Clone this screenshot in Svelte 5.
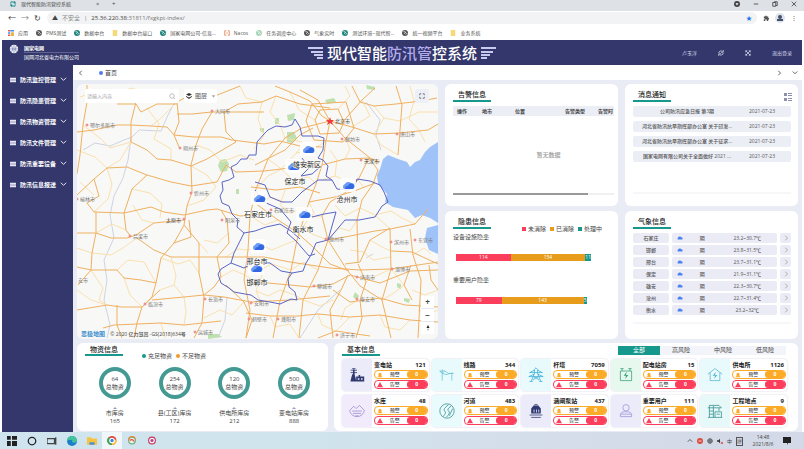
<script>
	const bookmarks = [
		{ name: '应用', icon: 'apps' },
		{ name: 'PMS测试', icon: 'globe' },
		{ name: '数据中台', icon: 'grid' },
		{ name: '数据中台接口', icon: 'folder' },
		{ name: '国家电网公司-信息...', icon: 'grid' },
		{ name: 'Nacos', icon: 'nacos' },
		{ name: '任务调度中心', icon: 'leaf' },
		{ name: '气象实时', icon: 'globe' },
		{ name: '测试环境--现代智...', icon: 'grid' },
		{ name: '统一视频平台', icon: 'globe' },
		{ name: '业务系统', icon: 'folder' }
	];

	const menu = ['防汛监控管理', '防汛隐患管理', '防汛物资管理', '防汛文件管理', '防汛重要设备', '防汛信息报送'];

	const notices = [
		{ text: '公司防汛应急日报 第3期', date: '2021-07-23' },
		{ text: '河北省防汛抗旱指挥部办公室 关于印发...', date: '2021-07-23' },
		{ text: '河北省防汛抗旱指挥部办公室 关于征求...', date: '2021-07-23' },
		{ text: '国家电网有限公司关于全面做好 2021 ...', date: '2021-07-23' }
	];

	const weather = [
		['石家庄', '23.2~30.7℃'],
		['邯郸', '23.8~31.5℃'],
		['邢台', '23.7~31.1℃'],
		['保定', '21.9~31.1℃'],
		['雄安', '22.3~30.7℃'],
		['沧州', '22.7~31.4℃'],
		['衡水', '23.2~32℃']
	];

	const dangers = [
		{ name: '设备设施隐患', parts: [[114, 36], [154, 49], [11, 4]] },
		{ name: '重要用户隐患', parts: [[79, 30], [143, 54], [5, 2]] }
	];

	const stores = [
		{ name: '市库房', total: 64, count: 165 },
		{ name: '县(工区)库房', total: 254, count: 172 },
		{ name: '供电所库房', total: 120, count: 212 },
		{ name: '变电站库房', total: 500, count: 888 }
	];

	const stats = [
		{ name: '变电站', count: 121, tint: '#ecebfa', color: '#2f3a70', fill: 'M2 18V17L4 9H5V3H7V9L9 17V12H12V10H14V12H19V18ZM11 14V16H13V14ZM15 14V16H17V14Z', line: 'M2 4H10M2 7H10M4 2H8' },
		{ name: '线路', count: 344, tint: '#e9fafd', color: '#6fc5d6', fill: '', line: 'M4 3V17M16 7V17M1 5H7M13 8H18M1 5Q8 12 13 8M7 5Q12 10 18 8M4 8L1 5M4 8L7 5' },
		{ name: '杆塔', count: 7059, tint: '#e9fafd', color: '#3fb0d4', fill: '', line: 'M4 18L8 8V3L10 1L12 3V8L16 18M2 7L8 4M12 4L18 7H2M1 12L8 9M12 9L19 12H1M7 12L14 16M13 12L6 16M2 18H6M14 18H18' },
		{ name: '配电站房', count: 15, tint: '#e7f8ee', color: '#3da57c', fill: 'M11 6L7 11H10L9 15L13 10H10Z', line: 'M3 5H17V17H3ZM5 5V2M15 5V2M3 2H7M13 2H17' },
		{ name: '供电所', count: 1126, tint: '#e9fafd', color: '#5bb8cf', fill: 'M11 6L7 11H10L9 15L13 10H10Z', line: 'M1 9L10 2L19 9M4 7V17H16V7' },
		{ name: '水库', count: 48, tint: '#f1ebfb', color: '#9a8fd2', fill: '', line: 'M1 9L6 4L9 7L13 3L19 9M1 9A9 8 0 0 0 19 9M4 10H16M5 13H15M8 16H12' },
		{ name: '河道', count: 483, tint: '#e9fbfc', color: '#3c9292', fill: '', line: 'M10 1A9 9 0 1 0 10 19A9 9 0 1 0 10 1M12 2Q4 8 7 10T5 17M15 4Q9 8 12 10T9 18M17 7L13 16' },
		{ name: '涵闸泵站', count: 437, tint: '#ecebfa', color: '#2f3a70', fill: 'M4 7L7 3H13L16 7V13H4ZM7 8V12H8V8ZM10 8V12H11V8ZM13 8V12H14V8Z', line: 'M8 2H12M2 15H18M4 18H16' },
		{ name: '重要用户', count: 111, tint: '#ecebfa', color: '#a294da', fill: '', line: 'M10 2A4 4 0 1 0 10 10A4 4 0 1 0 10 2M3 17V14Q4 11 8 11H12Q16 11 17 14V17ZM3 14H17' },
		{ name: '工程地点', count: 9, tint: '#e7f8f8', color: '#3c9494', fill: '', line: 'M3 18V3H8V18M1 6H18L15 3H8M15 6V10M10 18V11H18V18M1 18H19M12 14H16M3 10H8M3 14H8' }
	];

	// main roads, drawn in orange over the lighter net of small ones
	const roads = [
		'M87 85L87 102L83 125L80 155L77 174',
		'M77 132L94 130L117 125L131 125L151 126L167 127L174 135L194 137L221 137L232 140L264 144L280 141L300 146L322 147',
		'M136 102L131 122L131 142L147 150L157 159L171 160L191 166L207 159L224 149L236 142',
		'M212 112L202 129L196 145L191 165L192 192L187 206L184 225',
		'M177 102L179 122L174 135L179 147',
		'M77 195L94 179L107 168L127 167L147 175L171 182L191 186L217 182L226 165L236 172L264 171L290 168L320 163',
		'M94 179L99 196L87 203L94 212L124 213L151 207L164 212L184 215L207 210L217 209L240 216L262 214',
		'M147 175L132 189L124 213L126 230L131 237',
		'M117 104L136 104L141 112L157 104L177 104M177 114L192 114L212 112L264 112M224 112L226 132L236 142',
		'M177 102L190 95L215 96L240 86M224 112L238 104L262 102L276 96L300 104L330 108',
		'M77 233L96 233L111 238L127 238L136 235L154 223L184 220',
		'M184 225L174 243L161 258L156 283L152 297L142 307L137 323L134 338',
		'M137 238L154 250L171 257L217 257L264 257L290 262L330 268L360 270L391 269L438 262',
		'M184 225L199 243L199 273L204 297L202 323L194 338',
		'M77 267L91 270L117 270L124 278L141 280L156 283',
		'M152 300L184 297L204 295L224 297L251 302L290 300L330 296',
		'M77 310L107 305L121 307L142 307L160 290',
		'M103 328L114 325L161 323L184 325L221 321M117 305L117 325L122 338',
		'M221 210L227 220L229 243L217 257L221 277L214 287L204 295',
		'M96 212L96 233L92 253L91 270L78 285',
		'M174 243L191 237L189 220',
		'M275 86L290 92L310 101L322 116L330 121L345 138L370 158L380 162',
		'M330 121L318 100L300 90M330 121L326 141L322 165L316 184L309 202L297 240L291 270L280 301L273 338',
		'M330 121L302 128L285 138L268 159L256 189L250 216L248 250L244 280L250 310L246 338',
		'M330 121L352 127L374 134L400 133L428 130L438 124M398 155L400 130L402 105L396 86',
		'M352 86L360 102L374 106L396 104L421 101L437 98M340 125L362 100L375 88',
		'M320 110L338 109L344 122L339 133L320 134L315 120ZM312 104L346 102L354 128L343 142L314 140L306 121Z',
		'M322 165L345 159L369 158L378 170L373 184L362 200L357 220L358 263',
		'M369 158L358 180L345 193L330 202L322 216L328 240L347 270L360 286L382 300L391 338',
		'M309 202L335 197L357 190L375 183',
		'M255 203L278 220L295 231L312 246L330 264L349 271',
		'M328 240L345 237L375 231L390 229L415 224L428 209',
		'M390 229L391 269L382 300M410 229L413 255L421 280L418 338M391 251L412 252L438 264',
		'M345 264L360 262L370 240L390 228M358 264L366 282L360 300L362 318L356 338',
		'M256 282L290 285L310 287L333 284L350 275L380 283L410 271L438 270',
		'M299 338L303 300L318 270L328 240M333 338L330 310L341 290L348 275',
		'M246 313L270 316L298 316L318 314L350 317L380 315L410 320L438 322',
		'M333 290L350 302L380 298L405 305L438 307',
		'M226 285L244 302L252 320L246 338M318 338L336 331L370 336',
		'M251 187L276 190L300 187L320 193M255 165L285 150L300 135L313 128',
		'M411 265L404 285L412 300M429 265L431 280L438 290'
	];

	const smallRoads = [
		'M80 97L98 91L118 94L131 88L150 94L170 90L177 102L160 119L151 126',
		'M83 125L101 139L110 148L131 142L120 160L107 168M147 108L159 124L154 139L171 149L171 160',
		'M191 166L207 175L216 187L204 200L187 206M196 145L210 150L222 162L240 155L254 160',
		'M132 189L150 193L162 204L160 218M107 168L112 184L108 199L94 212M80 182L94 195',
		'M96 233L112 224L126 230M92 253L111 255L123 248L137 238M117 270L128 260L144 262L156 283',
		'M91 270L103 288L99 300L107 305M124 278L130 295L142 307M160 290L174 285L184 297L186 312L184 325',
		'M161 258L178 264L190 260L199 273M171 257L176 276L174 285M204 240L217 243L229 233M199 243L208 253',
		'M221 277L233 270L245 275L256 282M204 318L220 310L232 315L244 302M161 323L165 338',
		'M240 86L246 98L262 102L258 119L264 136L254 149M276 96L270 112L280 125L285 138L302 142',
		'M290 92L299 110L315 120M338 109L350 96L345 86M362 100L370 116L352 127M374 106L384 118L374 134',
		'M384 118L400 121L419 112L438 112M410 86L414 101L409 119L419 130L425 142M374 134L381 145L398 155',
		'M256 189L268 176L280 170L291 159L302 146M268 159L279 167L293 180L309 177L316 184',
		'M285 190L280 205L291 213L302 208L309 217L322 216M258 205L270 197L285 202M250 216L265 225L278 220',
		'M322 180L335 176L345 180L358 180L364 188M330 150L337 160L335 176M345 138L350 149L345 159',
		'M326 141L312 150L296 153M309 202L314 213L304 225L312 234L328 240L339 228L350 231L357 220',
		'M248 250L261 245L272 250L286 244L297 240M244 267L260 270L272 264L291 270L303 262L318 270',
		'M256 291L268 296L280 290L295 295L303 300L320 306L333 300M270 316L275 327L290 324L299 338',
		'M335 205L345 216L360 208L375 215L390 229M375 215L391 211L402 218L415 224M370 240L382 247L391 251',
		'M350 250L364 252L373 260L391 257M366 282L378 275L391 269L404 285L394 293L382 300M412 290L425 295L438 290',
		'M318 314L322 325L336 331L345 322L350 317M380 315L385 327L400 330L410 320M418 310L428 314L438 310',
		'M413 255L424 248L431 254M358 300L345 308L341 320M256 260L262 275L256 291L262 305M226 257L238 249L248 250',
		'M77 150L95 157L107 168M133 205L142 220L154 223M77 248L92 253M77 290L91 300L107 305'
	];

	const borders = [
		'M264 134L257 142L256 155L249 155L247 159L241 159L237 164L231 167L234 177L229 180L222 182L223 190L220 196L222 203L229 206L232 214L238 220L237 227L244 233L239 243L234 253L231 263L221 269L218 274L221 283L229 288L234 292L245 294L251 295L258 300L270 302L280 304L291 299L297 300L295 292L289 287L288 279L292 273L303 271L306 263L311 255L316 243L328 240L345 220L359 220L375 217L382 206L388 202L384 192L380 185L370 181L357 179L354 187L348 190L337 189L332 180L326 176L328 166L323 160L318 158L323 150L324 138L318 136L302 136L300 127L295 119L292 125L285 127L276 126L268 130L264 134',
		'M255 182L265 185L270 197L282 202L292 202L302 192L318 180L332 180',
		'M255 190L264 202L280 209L291 222L287 233L296 241L309 256L315 254',
		'M244 233L255 231L266 227L280 224L291 231L300 239',
		'M231 263L244 268L255 262L270 263L281 271L292 273',
		'M302 158L309 168L301 176L312 174L321 166M305 209L312 217L324 214L336 212L328 240'
	];

	const cities = [
		['鄂尔多斯市', 90, 127], ['大同市', 215, 113], ['朔州市', 183, 150], ['忻州市', 194, 195], ['榆林市', 80, 201],
		['吕梁市', 133, 238], ['阳泉市', 225, 222], ['安市', 78, 282], ['临汾市', 148, 306], ['长治市', 208, 301],
		['运城市', 198, 334], ['廊坊市', 345, 141], ['唐山市', 400, 136], ['石家庄市', 274, 212], ['德州市', 329, 241],
		['滨州市', 394, 244], ['东营市', 418, 242], ['济南市', 360, 279], ['淄博市', 395, 271], ['聊城市', 317, 288],
		['泰安市', 360, 301], ['济宁市', 340, 337], ['濮阳市', 281, 321], ['安阳市', 254, 305], ['鹤壁市', 252, 321]
	];

	const places = [
		['雄安新区', 307, 167], ['保定市', 295, 184], ['沧州市', 347, 202], ['石家庄市', 258, 217],
		['衡水市', 303, 232], ['邢台市', 257, 264], ['邯郸市', 257, 285]
	];

	const clouds = [[308, 149], [293, 166], [348, 185], [259, 198], [304, 214], [258, 246], [256, 268]];

	let keyword = '';
	let layer = '图层';
	let risk = '全部';
</script>

<div class="browser">
	<div class="tabstrip">
		<svg class="ico" viewBox="0 0 8 8"><circle cx="4" cy="4" r="4" fill="#22848a" /><path d="M0 4H8M4 0V8M1 2L7 6" stroke="#fff" /></svg>
		<span class="tab-title">现代智能防汛管控系统</span>
		<span class="close">×</span>
		<span class="plus">+</span>
		<span class="win">
			<svg class="ico" viewBox="0 0 8 8"><circle cx="4" cy="4" r="4" fill="#444" /><path d="M2 3H6L4 6Z" fill="#fff" /></svg>
			<svg class="ico" viewBox="0 0 8 8"><path d="M1 4H7" stroke="#333" /></svg>
			<svg class="ico" viewBox="0 0 8 8"><path d="M1 2H5V7H1ZM3 2V1H7V6H5" fill="none" stroke="#333" /></svg>
			<svg class="ico" viewBox="0 0 8 8"><path d="M1 1L7 7M7 1L1 7" stroke="#333" /></svg>
		</span>
	</div>
	<div class="addressbar">
		<span class="arrow">←</span><span class="arrow dim">→</span><span class="arrow">↻</span>
		<div class="url">
			<span>▲</span><span class="dim">不安全</span><span class="dim">|</span>
			<span>25.36.220.38<i>:31811/fxgkpt-index/</i></span>
			<span class="star">★</span>
		</div>
		<svg class="ico" viewBox="0 0 8 8"><path d="M1 2H3V1H5V2H7V4H8V6H7V8H5V6H3V8H1V6H2V4H1Z" fill="#555" /></svg>
		<svg class="avatar" viewBox="0 0 10 10"><circle cx="5" cy="5" r="5" fill="#dfe3ec" /><circle cx="5" cy="4" r="2" fill="#44506c" /><path d="M2 8V6H8V8Z" fill="#44506c" /></svg>
		<span>⋮</span>
	</div>
	<nav class="bookmarks">
		{#each bookmarks as b}
			<a href="#{b.name}">
				<svg class="ico" viewBox="0 0 8 8">
					{#if b.icon === 'apps'}
						<path d="M0 0H3V2H0ZM0 6H3V8H0Z" fill="#e85a4f" /><path d="M3 0H8V2H3ZM0 3H3V5H0Z" fill="#4c8bf5" /><path d="M4 3H8V8H4Z" fill="#e8b647" />
					{:else if b.icon === 'folder'}
						<path d="M1 0H7V8H1Z" fill="#f8d978" />
					{:else if b.icon === 'nacos'}
						<path d="M3 1H1V7H3M5 1H7V7H5M3 4H5" fill="none" stroke="#e2703a" />
					{:else}
						<circle cx="4" cy="4" r="4" fill={b.icon === 'globe' ? '#555' : b.icon === 'grid' ? '#22847c' : '#a8d5b9'} />
						<path d="M2 2L5 3L3 5M5 6L7 4" fill="none" stroke="#fff" />
					{/if}
				</svg>{b.name}
			</a>
		{/each}
	</nav>
</div>

<div class="app">
	<header>
		<div class="brand">
			<svg viewBox="0 0 12 12"><circle cx="6" cy="6" r="5" fill="#fff" /><path d="M1 6H11M6 1V11M3 2Q6 6 3 10M9 2Q6 6 9 10" fill="none" stroke="#7e86b4" /></svg>
			<div>
				<b>国家电网</b>
				<small>国网河北省电力有限公司</small>
			</div>
		</div>
		<h1>
			<svg viewBox="0 0 15 12"><path d="M0 1H15M3 5H15M6 8H15M9 11H15" stroke="#c9caf0" stroke-width="2" /></svg>
			<span>现代智能<em>防汛管</em>控系统</span>
			<svg viewBox="0 0 15 12"><path d="M0 1H15M0 5H12M0 8H9M0 11H6" stroke="#c9caf0" stroke-width="2" /></svg>
		</h1>
		<div class="user">
			<span>卢玉洋</span>
			<button aria-label="刷新"><svg class="ico" viewBox="0 0 8 8"><path d="M1 4A3 3 0 0 1 6 2M7 4A3 3 0 0 1 2 6M7 0V3H4M1 8V5H4" fill="none" stroke="#dcdcf0" /></svg></button>
			<button aria-label="全屏"><svg class="ico" viewBox="0 0 8 8"><path d="M1 1L7 7M7 1L1 7M1 3V1H3M5 1H7V3M1 5V7H3M5 7H7V5" fill="none" stroke="#dcdcf0" /></svg></button>
			<button>退出登录</button>
		</div>
	</header>

	<div class="body">
		<aside>
			{#each menu as item}
				<button>
					<svg class="ico" viewBox="0 0 8 8"><path d="M0 1H8V7H0Z" fill="#e5e6f3" /><path d="M0 4H8" stroke="#7d81ab" /></svg>
					<span>{item}</span>
					<svg class="chev" viewBox="0 0 8 8"><path d="M1 2L4 5L7 2" fill="none" stroke="#fff" /></svg>
				</button>
			{/each}
		</aside>

		<main>
			<div class="crumbs">
				<svg class="ico" viewBox="0 0 8 8"><path d="M5 1L2 4L5 7" fill="none" stroke="#333" /></svg>
				<a href="#home"><i></i>首页</a>
				<svg class="ico" viewBox="0 0 8 8"><path d="M3 1L6 4L3 7" fill="none" stroke="#333" /></svg>
				<svg class="ico" viewBox="0 0 8 8"><path d="M1 2L4 5L7 2" fill="none" stroke="#333" /></svg>
			</div>

			<div class="top">
				<section class="card map">
					<svg class="canvas" viewBox="77 84 361 255" preserveAspectRatio="xMidYMid slice">
						<path class="sea" d="M438 142L430 147L425 152L420 160L415 162L410 167L407 162L398 159L388 155L383 159L380 169L377 175L378 184L387 194L385 202L393 207L408 210L415 218L422 215L430 218L438 223ZM438 225L427 228L425 238L429 250L438 254Z" />
						<path class="wood" d="M220 160l6-1 3 5-2 7-6 1-3-6ZM287 132l7 0 3 6-4 5-6-1ZM287 115l8-2-1 7-6 1ZM366 85l9 2 0 3-8-1ZM325 100l9-2 2 4-9 2ZM275 118l4 0 0 6-4 0ZM355 292l4 4-2 4-4-3ZM397 283l4 1 0 5-4-2ZM404 298l6 1-1 4-5-2ZM208 334l10 0 4 3-14 2ZM260 128l4 0 0 5-4-2ZM236 189l3 0 0 5-3 0Z" />
						<path class="river" d="M83 150L95 143L110 146L124 140L132 137L139 130L161 131L168 115L177 98M131 138L128 160L123 178L114 196L110 215L114 238L104 260L107 280L104 300L110 325L107 338M366 102L380 120L376 135L381 150M227 298L225 320L218 338M300 338L318 310L340 290M366 258L373 254" />
						{#each smallRoads as d}<path class="lane" {d} />{/each}
						{#each roads as d}<path class="road" {d} />{/each}
						{#each borders as d}<path class="border" {d} />{/each}
						{#each cities as [name, x, y]}
							<circle class="dot" cx={x - 3} cy={y - 2} r="1" />
							<text class="city" {x} {y}>{name}</text>
						{/each}
						<path d="M330 117l1 3 3 0-2 2 1 3-3-2-3 2 1-3-2-2 3 0Z" fill="#ef3b3b" />
						<text class="city dark" x="335" y="123">北京市</text>
						<circle class="dot" cx="361" cy="160" r="1" />
						<text class="city dark" x="364" y="163">天津市</text>
						<text class="city dark" x="166" y="222">太原市</text>
						<circle class="dot" cx="184" cy="219" r="1" />
						{#each clouds as [x, y]}
							<g transform="translate({x} {y})">
								<rect x="-8" y="-7" width="16" height="14" rx="2" fill="#fff" opacity=".85" />
								<path d="M-5 2A3 3 0 0 1-3-1A4 4 0 0 1 3-2A3 3 0 0 1 4 4H-3A2 2 0 0 1-5 2Z" fill="#6c9bf5" />
								<path d="M0 1A3 3 0 0 1 6 2A2 2 0 0 1 4 4H-3A3 3 0 0 1 0 1Z" fill="#3468e0" />
							</g>
						{/each}
						{#each places as [name, x, y]}<text class="place" {x} {y}>{name}</text>{/each}
					</svg>
					<div class="map-tools">
						<label class="search">
							<input placeholder="请输入内容" aria-label="请输入内容" bind:value={keyword} />
							<svg class="ico" viewBox="0 0 8 8"><path d="M4 1A3 3 0 1 0 4 7A3 3 0 1 0 4 1M6 6L8 8" fill="none" stroke="#aaa" /></svg>
						</label>
						<label class="layers">
							<svg class="ico" viewBox="0 0 8 8"><path d="M4 0L8 2L4 4L0 2ZM0 4L4 6L8 4V5L4 8L0 5Z" fill="#333" /></svg>
							<select bind:value={layer} aria-label="图层"><option>图层</option></select>
							<svg class="caret" viewBox="0 0 8 8"><path d="M1 2H7L4 6Z" fill="#aaa" /></svg>
						</label>
					</div>
					<button class="expand" aria-label="全屏"><svg class="ico" viewBox="0 0 8 8"><path d="M1 3V1H3M5 1H7V3M7 5V7H5M3 7H1V5" fill="none" stroke="#555" /></svg></button>
					<div class="zoom">
						<button aria-label="放大">+</button>
						<button aria-label="缩小">−</button>
						<button aria-label="指北"><svg class="ico" viewBox="0 0 8 8"><path d="M4 0L6 4H2Z" fill="#222" /><path d="M3 5H5L4 8Z" fill="#888" /></svg></button>
					</div>
					<p class="credit"><b>思极地图</b> © 2020 亿力慧高 -GS(2018)634号</p>
				</section>

				<section class="card alarm">
					<h2>告警信息</h2>
					<table>
						<thead><tr><th>操作</th><th>地市</th><th>位置</th><th>告警类型</th><th>告警时</th></tr></thead>
					</table>
					<p class="empty">暂无数据</p>
					<div class="scroll"><i></i></div>
				</section>

				<section class="card notice">
					<h2>消息通知</h2>
					<svg class="more" viewBox="0 0 8 8"><path d="M0 0H3V3H0ZM0 5H3V8H0ZM4 0H8V1H4ZM4 2H8V3H4ZM4 5H8V6H4ZM4 7H8V8H4Z" fill="#8d90a8" /></svg>
					<ul>
						{#each notices as n}
							<li><span>{n.text}</span><time>{n.date}</time></li>
						{/each}
					</ul>
				</section>

				<section class="card danger">
					<h2>隐患信息</h2>
					<div class="legend">
						<span class="pink">未消除</span><span class="amber">已消除</span><span class="teal">处理中</span>
					</div>
					{#each dangers as d}
						<h3>{d.name}</h3>
						<div class="bar">
							{#each d.parts as [value, width]}<span style="width: {width}%">{value}</span>{/each}
						</div>
					{/each}
				</section>

				<section class="card weather">
					<h2>气象信息</h2>
					<ul>
						{#each weather as [city, temp]}
							<li>
								<span class="name">{city}</span>
								<div>
									<svg class="ico" viewBox="0 0 8 8"><path d="M1 6A2 2 0 0 1 1 4A3 3 0 0 1 6 3A2 2 0 0 1 7 6Z" fill="#4a83ee" /></svg>
									<span>阴</span><span>{temp}</span>
								</div>
								<button aria-label={city}><svg class="ico" viewBox="0 0 8 8"><path d="M3 1L6 4L3 7" fill="none" stroke="#999" /></svg></button>
							</li>
						{/each}
					</ul>
				</section>
			</div>

			<div class="bottom">
				<section class="card goods">
					<h2>物资信息</h2>
					<div class="legend round"><span class="teal">充足物资</span><span class="orange">不足物资</span></div>
					<div class="rings">
						{#each stores as s}
							<div>
								<div class="ring"><span>{s.total}</span><span>总物资</span></div>
								<i></i>
								<span>{s.name}</span>
								<span>{s.count}</span>
							</div>
						{/each}
					</div>
				</section>

				<section class="card basic">
					<div class="basic-head">
						<h2>基本信息</h2>
						<div class="risks">
							{#each ['全部', '高风险', '中风险', '低风险'] as r}
								<button class:active={risk === r} on:click={() => (risk = r)}>{r}</button>
							{/each}
						</div>
					</div>
					<div class="stats">
						{#each stats as s}
							<article>
								<div class="pic" style="background: {s.tint}">
									<svg viewBox="0 0 20 20">
										<path d={s.fill} fill={s.color} fill-rule="evenodd" />
										<path d={s.line} fill="none" stroke={s.color} />
									</svg>
								</div>
								<div class="info">
									<p><span>{s.name}</span><span>{s.count}</span></p>
									<div class="pill warn"><svg class="ico" viewBox="0 0 8 8"><path d="M2 6V3A2 2 0 0 1 6 3V6H7V7H1V6Z" /></svg><span>预警</span><b>0</b></div>
									<div class="pill alert"><svg class="ico" viewBox="0 0 8 8"><path d="M4 0L8 7H0Z" /></svg><span>告警</span><b>0</b></div>
								</div>
							</article>
						{/each}
					</div>
				</section>
			</div>
		</main>
	</div>
</div>

<footer>
	<svg class="task" viewBox="0 0 8 8"><path d="M0 0H3V3H0ZM4 0H8V3H4ZM0 4H3V8H0ZM4 4H8V8H4Z" fill="#222" /></svg>
	<svg class="task" viewBox="0 0 8 8"><circle cx="4" cy="4" r="3" fill="none" stroke="#222" /></svg>
	<svg class="task" viewBox="0 0 8 8"><path d="M0 2H6V6H0ZM7 1V7" fill="none" stroke="#444" /></svg>
	<svg class="task" viewBox="0 0 8 8"><circle cx="4" cy="4" r="4" fill="#1d7fc9" /><path d="M0 4A4 4 0 0 1 8 4Q7 6 4 5Q5 3 3 3Q1 3 0 4Z" fill="#43c59a" /></svg>
	<svg class="task" viewBox="0 0 8 8"><path d="M0 1H3L4 2H8V7H0Z" fill="#f5c343" /><path d="M2 5H6V7H2Z" fill="#4a90d9" /></svg>
	<svg class="task on run" viewBox="0 0 8 8"><circle cx="4" cy="4" r="4" fill="#e0443a" /><path d="M4 4L1 1A4 4 0 0 0 4 8Z" fill="#3da454" /><path d="M4 4V8A4 4 0 0 0 8 3Z" fill="#f7c73c" /><circle cx="4" cy="4" r="2" fill="#3f7fe8" stroke="#fff" /></svg>
	<svg class="task run" viewBox="0 0 8 8"><circle cx="4" cy="4" r="3" fill="#e4f1e4" stroke="#6fae7b" /><path d="M1 4A3 3 0 0 1 7 3" fill="none" stroke="#e98a3a" /><path d="M2 4Q4 2 6 5" fill="none" stroke="#e0524d" /></svg>
	<svg class="task run" viewBox="0 0 8 8"><circle cx="4" cy="4" r="3" fill="#fff" stroke="#c2335b" /><circle cx="4" cy="4" r="1" fill="#4452b8" stroke="#d0508a" /></svg>
	<div class="tray">
		<svg class="ico" viewBox="0 0 8 8"><path d="M1 5L4 2L7 5" fill="none" stroke="#333" /></svg>
		<svg class="ico" viewBox="0 0 8 8"><circle cx="4" cy="4" r="4" fill="#d94a3f" /><path d="M2 4H6" stroke="#fff" /></svg>
		<svg class="ico" viewBox="0 0 8 8"><path d="M4 1A3 3 0 1 0 4 7A3 3 0 1 0 4 1M1 4H7M4 1V7" fill="none" stroke="#333" /></svg>
		<svg class="ico" viewBox="0 0 8 8"><path d="M0 3H2L4 1V7L2 5H0Z" fill="#333" /><path d="M5 5L8 8M8 5L5 8" stroke="#d33" /></svg>
		<span>中</span>
		<span class="ime">拼</span>
		<time>14:48<br />2021/8/6</time>
		<svg class="note" viewBox="0 0 8 8"><path d="M0 0H8V6H5L4 8V6H0Z" fill="#222" /></svg>
	</div>
</footer>

<style>
	:global(body) {
		background: #fff;
		color: #444;
		font: 5px/8px 'Open Sans', 'Noto Sans CJK SC', sans-serif;
	}

	h1, h2, h3, p, ul {
		margin: 0;
		padding: 0;
		list-style: none;
		font-weight: 500;
	}

	button, input, select {
		margin: 0;
		border: 0;
		padding: 0;
		background: none;
		color: inherit;
		font: inherit;
	}

	a {
		color: inherit;
		text-decoration: none;
	}

	i {
		font-style: normal;
	}

	svg {
		display: block;
		flex: none;
	}

	.ico {
		width: 6px;
		height: 6px;
	}

	.dim {
		color: #888;
	}

	.tabstrip {
		display: flex;
		align-items: center;
		gap: 5px;
		box-sizing: border-box;
		height: 11px;
		padding: 0 7px 3px 10px;
		background: #dee1e6;
	}

	.tab-title {
		width: 70px;
	}

	.close, .plus {
		width: 11px;
		font-size: 6px;
	}

	.win {
		display: flex;
		align-items: center;
		gap: 13px;
		margin-left: auto;
	}

	.addressbar {
		display: flex;
		align-items: center;
		gap: 6px;
		height: 14px;
		padding: 0 7px 0 8px;
		font-size: 6px;
	}

	.arrow {
		width: 7px;
		font-size: 8px;
	}

	.url {
		display: flex;
		flex: 1;
		align-items: center;
		gap: 4px;
		border-radius: 6px;
		padding: 1px 5px;
		background: #f1f3f4;
		line-height: 10px;
	}

	.url i {
		color: #777;
	}

	.star {
		margin-left: auto;
		color: #1a73e8;
	}

	.avatar {
		width: 10px;
		height: 10px;
	}

	.bookmarks {
		display: flex;
		gap: 8px;
		height: 15px;
		padding-left: 8px;
	}

	.bookmarks a {
		display: flex;
		align-items: center;
		gap: 4px;
		color: #555;
		white-space: nowrap;
	}

	.app {
		padding: 0 2px;
	}

	header {
		display: grid;
		grid-template-columns: 1fr auto 1fr;
		align-items: center;
		height: 25px;
		background: #33376c;
		color: #fff;
	}

	.brand {
		display: flex;
		gap: 5px;
		padding-left: 7px;
	}

	.brand svg {
		width: 10px;
		height: 10px;
	}

	.brand b, .brand small {
		display: block;
		font-size: 5px;
	}

	.brand b {
		border-bottom: 1px solid #5f6390;
	}

	h1 {
		display: flex;
		align-items: center;
		gap: 4px;
		font: 500 15px/22px 'Noto Sans CJK SC', sans-serif;
	}

	h1 svg {
		width: 15px;
		height: 12px;
	}

	h1 em {
		color: #b3acf0;
		font-style: normal;
	}

	.user {
		display: flex;
		align-items: center;
		justify-content: flex-end;
		gap: 21px;
		padding-right: 10px;
		color: #d5d6ea;
	}

	.body {
		display: flex;
	}

	aside {
		flex: none;
		width: 71px;
		padding-top: 4px;
		background: #33376c;
	}

	aside button {
		display: flex;
		align-items: center;
		gap: 4px;
		width: 100%;
		height: 21px;
		padding: 0 6px 0 8px;
		color: #fff;
		font-weight: 700;
		font-size: 6px;
		white-space: nowrap;
	}

	.chev {
		width: 7px;
		height: 7px;
		margin-left: auto;
	}

	main {
		flex: 1;
		min-width: 0;
		background: #eaecf5;
	}

	.crumbs {
		display: flex;
		align-items: center;
		gap: 10px;
		height: 15px;
		padding: 0 4px 0 5px;
		background: #fff;
	}

	.crumbs a {
		display: flex;
		align-items: center;
		gap: 2px;
		margin: 0 auto 0 5px;
		font-size: 6px;
	}

	.crumbs i {
		width: 4px;
		height: 4px;
		border-radius: 50%;
		background: #4f7df0;
	}

	.top {
		display: grid;
		grid-template-columns: 361fr 173fr 173fr;
		grid-template-rows: minmax(122px, auto) minmax(128px, auto);
		gap: 5px 7px;
		padding: 4px 4px 0;
	}

	.bottom {
		display: grid;
		grid-template-columns: 251fr 464fr;
		gap: 6px;
		padding: 4px 4px 1px;
	}

	.card {
		position: relative;
		box-sizing: border-box;
		min-width: 0;
		border-radius: 6px;
		padding: 5px 7px 4px 8px;
		background: #fff;
	}

	h2 {
		width: max-content;
		border-bottom: 2px solid #17988d;
		padding: 0 5px;
		color: #222;
		font-size: 7px;
		line-height: 11px;
	}

	.map {
		grid-row: span 2;
		padding: 0;
		overflow: hidden;
		background: #f8f8f6;
	}

	.canvas {
		position: absolute;
		width: 100%;
		height: 100%;
	}

	.sea { fill: #9fc3f8; }
	.wood { fill: #bfe0b0; }
	.river { fill: none; stroke: #cdd3e2; }
	.lane { fill: none; stroke: #fae0ae; }
	.road { fill: none; stroke: #efb061; stroke-linejoin: round; }
	.border { fill: none; stroke: #5a65c4; stroke-linejoin: round; }
	.dot { fill: #f6c0b8; stroke: #e88080; }

	.city {
		fill: #777;
		font-size: 5px;
	}

	.dark {
		fill: #444;
	}

	.place {
		fill: #222;
		font-size: 7px;
		text-anchor: middle;
		stroke: #fff;
		stroke-width: 1px;
		paint-order: stroke;
	}

	.map-tools {
		position: absolute;
		top: 5px;
		left: 8px;
		display: flex;
		gap: 5px;
		color: #555;
	}

	.search, .layers {
		display: flex;
		align-items: center;
		justify-content: space-between;
		box-sizing: border-box;
		height: 14px;
		border-radius: 2px;
		padding: 0 4px 0 2px;
		background: #fff;
	}

	.search {
		width: 94px;
	}

	input {
		width: 70px;
	}

	input::placeholder {
		color: #aaa;
	}

	.layers {
		gap: 3px;
		width: 33px;
	}

	select {
		width: 13px;
		appearance: none;
		font-size: 6px;
	}

	.caret {
		width: 5px;
		height: 5px;
	}

	.expand {
		position: absolute;
		top: 5px;
		right: 9px;
		padding: 4px;
		border-radius: 2px;
		background: #edf0f7;
	}

	.zoom {
		position: absolute;
		right: 4px;
		bottom: 5px;
		display: grid;
		gap: 1px;
		width: 13px;
		border-radius: 2px;
		background: #e6e8ee;
	}

	.zoom button {
		display: grid;
		place-items: center;
		height: 12px;
		background: #fff;
		font-weight: 700;
		font-size: 8px;
	}

	.credit {
		position: absolute;
		bottom: 1px;
		left: 4px;
	}

	.credit b {
		margin-right: 4px;
		color: #3f8fd0;
		font-size: 6px;
	}

	.alarm, .notice {
		display: flex;
		flex-direction: column;
	}

	.alarm {
		padding-right: 4px;
		padding-bottom: 11px;
	}

	table {
		width: 100%;
		margin-top: 4px;
		border-spacing: 0;
		background: #eceef6;
		table-layout: fixed;
	}

	th {
		padding: 1px 0 1px 4px;
		text-align: left;
		white-space: nowrap;
	}

	th:first-child { width: 21px; }
	th:nth-child(2) { width: 29px; }
	th:nth-child(3) { width: 46px; }
	th:nth-child(4) { width: 29px; }

	.empty {
		display: grid;
		flex: 1;
		place-items: center;
		padding-left: 30px;
		color: #999;
		font-size: 6px;
	}

	.scroll {
		height: 2px;
		background: #f0f0f2;
	}

	.scroll i {
		display: block;
		width: 84%;
		height: 2px;
		background: #999;
	}

	.more {
		position: absolute;
		top: 9px;
		right: 6px;
		width: 8px;
		height: 8px;
	}

	.notice ul {
		display: grid;
		gap: 4px;
		margin-top: 4px;
		border-bottom: 2px solid #f7f7fa;
		padding-bottom: 30px;
	}

	.notice li {
		display: grid;
		grid-template-columns: 2fr 1fr;
		border-radius: 2px;
		padding: 0 4px;
		background: #eceef6;
		color: #555;
		line-height: 11px;
		text-align: center;
		white-space: nowrap;
	}

	.legend {
		display: flex;
		gap: 4px;
		padding-left: 69px;
		font-size: 6px;
	}

	.danger .legend {
		margin-top: -4px;
	}

	.legend span::before {
		content: '';
		display: inline-block;
		width: 4px;
		height: 4px;
		margin-right: 2px;
	}

	.legend .pink::before { background: #fb3e5b; }
	.legend .amber::before { background: #e89c1c; }
	.legend .teal::before { background: #17988d; }
	.legend .orange::before { background: #f0992a; }

	.round span::before {
		border-radius: 50%;
	}

	h3 {
		font-size: 6px;
		font-weight: 400;
	}

	.bar {
		display: flex;
		margin: 13px 3px 15px;
		color: #fff;
		line-height: 7px;
		text-align: center;
	}

	.bar span:nth-child(1) { background: #fb3e5b; }
	.bar span:nth-child(2) { background: #e89c1c; }
	.bar span:nth-child(3) { background: #17988d; }

	.weather ul {
		display: grid;
		gap: 2px;
		margin-top: 4px;
		border-bottom: 2px solid #f7f7fa;
		padding-bottom: 7px;
	}

	.weather li {
		display: grid;
		grid-template-columns: 37fr 105fr 11fr;
		gap: 3px;
		color: #555;
		line-height: 10px;
		text-align: center;
	}

	.weather li > * {
		border-radius: 2px;
		background: #ebebf6;
	}

	.weather li div {
		display: grid;
		grid-template-columns: 15px 30px 60px;
		align-items: center;
		justify-items: center;
	}

	.weather button {
		display: grid;
		place-items: center;
	}

	.goods h2, .basic h2 {
		line-height: 9px;
	}

	.goods, .basic {
		padding-top: 2px;
	}

	.goods {
		padding-right: 4px;
	}

	.goods .legend {
		margin-top: -4px;
		padding-left: 57px;
	}

	.rings {
		display: grid;
		grid-template-columns: repeat(4, 1fr);
		margin-top: 7px;
	}

	.rings > div {
		display: grid;
		justify-items: center;
		font-size: 6px;
	}

	.ring {
		display: grid;
		place-content: center;
		justify-items: center;
		box-sizing: border-box;
		width: 32px;
		height: 32px;
		border: 4px solid #449a93;
		border-radius: 50%;
		line-height: 8px;
	}

	.rings i {
		margin-top: 8px;
		border: 2px solid transparent;
		border-top: 0;
		border-bottom-color: #9a9cc0;
	}

	.basic-head {
		display: flex;
		justify-content: space-between;
	}

	.risks {
		display: grid;
		grid-template-columns: repeat(4, 42px);
		align-self: center;
		margin-right: 5px;
		background: #f3f3fa;
		font-size: 6px;
		line-height: 9px;
	}

	.risks .active {
		background: #17988d;
		color: #fff;
	}

	.stats {
		display: grid;
		grid-template-columns: repeat(5, 1fr);
		gap: 4px 3px;
		margin: 3px 4px 0 0;
	}

	article {
		display: flex;
		box-sizing: border-box;
		height: 32px;
		border-radius: 4px;
		box-shadow: 0 0 2px #ccd;
	}

	.pic {
		display: grid;
		flex: none;
		place-items: center;
		width: 30px;
		border-radius: 4px 0 0 4px;
	}

	.pic svg {
		width: 16px;
		height: 16px;
	}

	.info {
		flex: 1;
		padding: 2px 1px 0 2px;
		color: #222;
	}

	.info p {
		display: flex;
		justify-content: space-between;
		padding-right: 2px;
		font-weight: 700;
		font-size: 6px;
		line-height: 9px;
	}

	.pill {
		display: flex;
		align-items: center;
		justify-content: space-between;
		margin-bottom: 1px;
		border: 1px solid var(--c);
		border-radius: 4px;
		padding-left: 2px;
		line-height: 7px;
	}

	.pill svg {
		fill: var(--c);
	}

	.pill b {
		width: 20px;
		border-radius: 3px;
		background: var(--c);
		color: #fff;
		text-align: center;
	}

	.warn { --c: #fbab28; }
	.alert { --c: #fb3e5b; }

	footer {
		display: flex;
		align-items: center;
		height: 18px;
		padding: 0 13px 0 2px;
		background: linear-gradient(90deg, #cfe4ee, #d0e4ed 40%, #d5dcea 70%, #d3d9e6);
	}

	.task {
		box-sizing: border-box;
		width: 20px;
		height: 18px;
		padding: 4px 5px;
	}

	.run {
		border-bottom: 1px solid #1b7fd0;
	}

	.on {
		background: #f0f7fb;
	}

	.tray {
		display: flex;
		align-items: center;
		gap: 4px;
		margin-left: auto;
		line-height: 7px;
	}

	.tray time {
		width: 28px;
		margin: 0 2px;
		text-align: center;
	}

	.note {
		width: 8px;
		height: 8px;
	}

	.ime {
		border: 1px solid #555;
	}
</style>
